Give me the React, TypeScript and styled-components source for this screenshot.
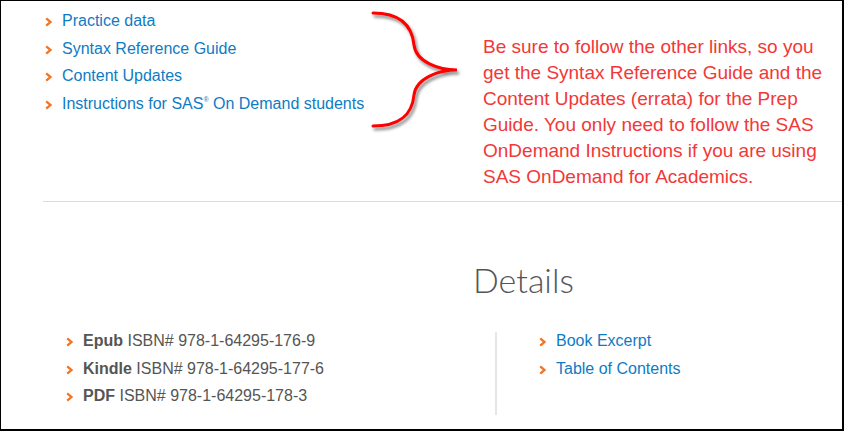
import styled, { createGlobalStyle } from 'styled-components';

const GlobalStyle = createGlobalStyle`
  html, body {
    margin: 0;
    padding: 0;
    background: #fff;
  }
  body {
    font-family: 'Liberation Sans', Arial, sans-serif;
  }
`;

const Frame = styled.div`
  width: 844px;
  height: 431px;
  box-sizing: border-box;
  border-style: solid;
  border-color: #000;
  border-width: 1px 2px 2px 1px;
  overflow: hidden;
  background: #fff;
`;

const Top = styled.section`
  display: flex;
  align-items: flex-start;
  height: 200px;
  margin-left: 42px;
  padding-left: 2px;
  border-bottom: 1px solid #dcdcdc;
`;

const LinkList = styled.ul<{ $width?: number }>`
  list-style: none;
  margin: 0;
  padding: 6px 0 0;
  width: ${(p) => (p.$width ? `${p.$width}px` : 'auto')};
  flex: 0 0 auto;
`;

const Item = styled.li<{ $dark?: boolean }>`
  font-size: 16px;
  line-height: 27.5px;
  white-space: nowrap;
  color: ${(p) => (p.$dark ? '#555' : '#0f7bc4')};

  b {
    font-weight: bold;
  }

  sup {
    font-size: 7px;
    vertical-align: 7px;
    line-height: 0;
  }
`;

const Chevron = styled.svg`
  display: inline-block;
  width: 7px;
  height: 10px;
  margin-right: 10px;
  vertical-align: -1px;
`;

const Brace = styled.svg`
  flex: 0 0 auto;
  width: 100px;
  height: 140px;
`;

const Note = styled.p`
  margin: 33px 0 0 18px;
  width: 355px;
  font-size: 19px;
  line-height: 26px;
  color: #f23838;
`;

const Heading = styled.h2`
  margin: 58px 0 0;
  padding-left: 472px;
  font-family: Lato, 'Open Sans', sans-serif;
  font-weight: 300;
  font-size: 34px;
  line-height: 40px;
  color: #555;
`;

const Columns = styled.div`
  display: flex;
  margin-top: 32px;
  padding-left: 65px;
`;

const Column = styled.div<{ $divider?: boolean; $width?: number }>`
  flex: 0 0 auto;
  width: ${(p) => (p.$width ? `${p.$width}px` : 'auto')};
  height: 83px;
  padding-left: ${(p) => (p.$divider ? 0 : 42)}px;
  border-right: ${(p) => (p.$divider ? '2px solid #e6e6e6' : 'none')};

  ul {
    margin-top: -5px;
    padding-top: 0;
  }
`;

function Arrow() {
  return (
    <Chevron viewBox="0 0 7 10">
      <path d="M1.2 1.3 L5.6 5 L1.2 8.7" fill="none" stroke="#f47521" strokeWidth="2.3" />
    </Chevron>
  );
}

const topLinks = ['Practice data', 'Syntax Reference Guide', 'Content Updates'];

export default function App() {
  return (
    <>
      <GlobalStyle />
      <Frame>
        <Top>
          <LinkList $width={320}>
            {topLinks.map((t) => (
              <Item key={t}>
                <Arrow />
                {t}
              </Item>
            ))}
            <Item>
              <Arrow />
              Instructions for SAS<sup>®</sup> On Demand students
            </Item>
          </LinkList>
          <Brace viewBox="0 0 100 140">
            <defs>
              <filter id="shadow" x="-20%" y="-20%" width="150%" height="150%">
                <feDropShadow dx="2" dy="3" stdDeviation="1.6" floodColor="#000" floodOpacity="0.45" />
              </filter>
            </defs>
            <path
              d="M8 12 C35 12 47 24 49 44 C51 61 74 69 92 69 C74 69 51 77 49 94 C47 114 35 125 8 125"
              fill="none"
              stroke="#f00"
              strokeWidth="3"
              strokeLinecap="round"
              filter="url(#shadow)"
            />
          </Brace>
          <Note>
            Be sure to follow the other links, so you get the Syntax Reference Guide and the
            Content Updates (errata) for the Prep Guide. You only need to follow the SAS
            OnDemand Instructions if you are using SAS OnDemand for Academics.
          </Note>
        </Top>
        <Heading>Details</Heading>
        <Columns>
          <Column $divider $width={429}>
            <LinkList>
              <Item $dark>
                <Arrow />
                <b>Epub</b> ISBN# 978-1-64295-176-9
              </Item>
              <Item $dark>
                <Arrow />
                <b>Kindle</b> ISBN# 978-1-64295-177-6
              </Item>
              <Item $dark>
                <Arrow />
                <b>PDF</b> ISBN# 978-1-64295-178-3
              </Item>
            </LinkList>
          </Column>
          <Column>
            <LinkList>
              <Item>
                <Arrow />
                Book Excerpt
              </Item>
              <Item>
                <Arrow />
                Table of Contents
              </Item>
            </LinkList>
          </Column>
        </Columns>
      </Frame>
    </>
  );
}
